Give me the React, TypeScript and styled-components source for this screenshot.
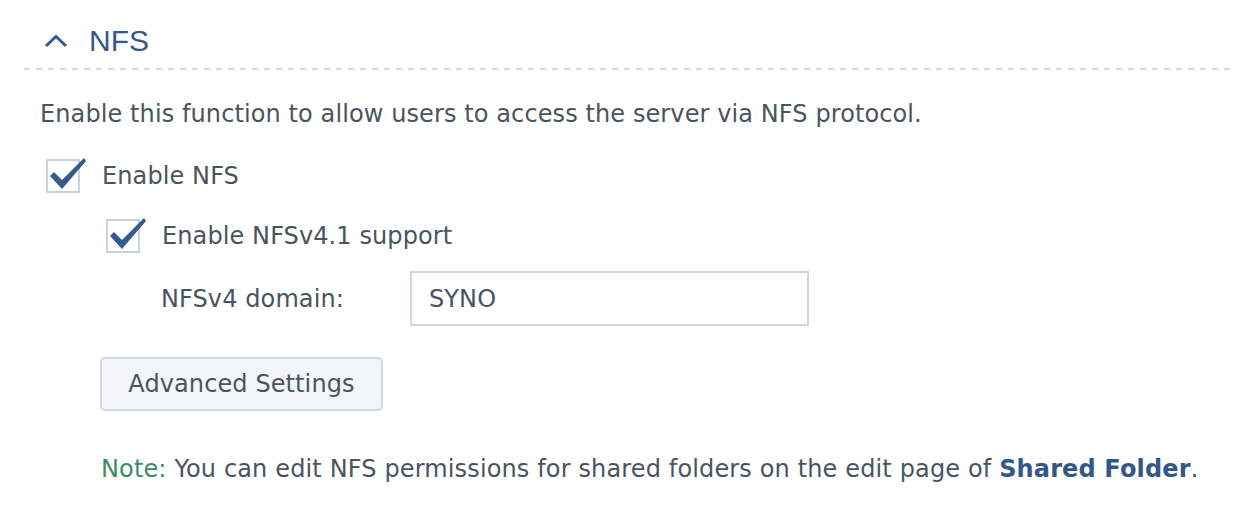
import React from "react";
import styled, { createGlobalStyle } from "styled-components";

const Global = createGlobalStyle`
  html, body { margin: 0; padding: 0; background: #ffffff; }
  body { font-family: "DejaVu Sans", Verdana, sans-serif; color: #4a5460; }
`;

const Page = styled.div`
  width: 1234px;
  height: 518px;
  box-sizing: border-box;
  padding: 0 4px 0 24px;
  display: flex;
  flex-direction: column;
`;

const Header = styled.div`
  display: flex;
  align-items: center;
  gap: 21px;
  height: 68px;
  padding: 14px 0 0 20px;
  box-sizing: border-box;
  color: #34578a;
`;

const Title = styled.span`
  font-family: "Liberation Sans", Arial, sans-serif;
  font-size: 30px;
  line-height: 1;
`;

const Divider = styled.div`
  height: 2px;
  background-image: linear-gradient(to right, #d2dae5 0 6px, transparent 6px 12px);
  background-size: 12px 2px;
  background-repeat: repeat-x;
`;

const Body = styled.div`
  display: flex;
  flex-direction: column;
  padding: 30px 0 0 16px;
  font-size: 24px;
  letter-spacing: 0.1px;
`;

const Description = styled.div`
  line-height: 28px;
  height: 28px;
`;

const CheckRow = styled.label<{ $indent: number; $top: number }>`
  display: flex;
  align-items: center;
  gap: 22px;
  margin: ${(p) => p.$top}px 0 0 ${(p) => p.$indent}px;
  height: 36px;
`;

const Box = styled.span`
  position: relative;
  width: 34px;
  height: 34px;
  box-sizing: border-box;
  border: 2px solid #c9d1dc;
  background: #fff;
  flex: none;
`;

const Tick = styled.svg`
  position: absolute;
  left: 0px;
  top: -6px;
  width: 40px;
  height: 36px;
  overflow: visible;
`;

const FieldRow = styled.div`
  display: flex;
  align-items: center;
  margin: 17px 0 0 121px;
`;

const FieldLabel = styled.span`
  width: 249px;
`;

const Input = styled.div`
  width: 399px;
  height: 55px;
  box-sizing: border-box;
  border: 2px solid #d0d8e2;
  display: flex;
  align-items: center;
  padding-left: 17px;
`;

const Button = styled.button`
  margin: 31px 0 0 60px;
  align-self: flex-start;
  width: 283px;
  height: 54px;
  box-sizing: border-box;
  border: 2px solid #d0d9e3;
  border-radius: 5px;
  background: #f3f6f9;
  font-family: inherit;
  font-size: 24px;
  letter-spacing: 0.1px;
  color: #4a5460;
  padding: 0;
`;

const Note = styled.div`
  margin: 44px 0 0 61px;
  line-height: 28px;
  white-space: nowrap;
  letter-spacing: 0.14px;
`;

const NoteLabel = styled.span`
  color: #3a8c6a;
`;

const Link = styled.span`
  color: #34578a;
  font-weight: bold;
`;

function Check() {
  return (
    <Box>
      <Tick viewBox="0 0 40 36">
        <path
          d="M2 21 L6 17 L14 25 L36 3 L38 6 L14 34 Z"
          fill="#355a8e"
        />
      </Tick>
    </Box>
  );
}

export default function App() {
  return (
    <>
      <Global />
      <Page>
        <Header>
          <svg width="24" height="14" viewBox="0 0 24 14">
            <path d="M2 12 L12 2.5 L22 12" fill="none" stroke="#34578a" strokeWidth="3" />
          </svg>
          <Title>NFS</Title>
        </Header>
        <Divider />
        <Body>
          <Description>Enable this function to allow users to access the server via NFS protocol.</Description>
          <CheckRow $indent={6} $top={30}>
            <Check />
            <span>Enable NFS</span>
          </CheckRow>
          <CheckRow $indent={66} $top={24}>
            <Check />
            <span>Enable NFSv4.1 support</span>
          </CheckRow>
          <FieldRow>
            <FieldLabel>NFSv4 domain:</FieldLabel>
            <Input>SYNO</Input>
          </FieldRow>
          <Button>Advanced Settings</Button>
          <Note>
            <NoteLabel>Note:</NoteLabel> You can edit NFS permissions for shared folders on the edit page of{" "}
            <Link>Shared Folder</Link>.
          </Note>
        </Body>
      </Page>
    </>
  );
}
